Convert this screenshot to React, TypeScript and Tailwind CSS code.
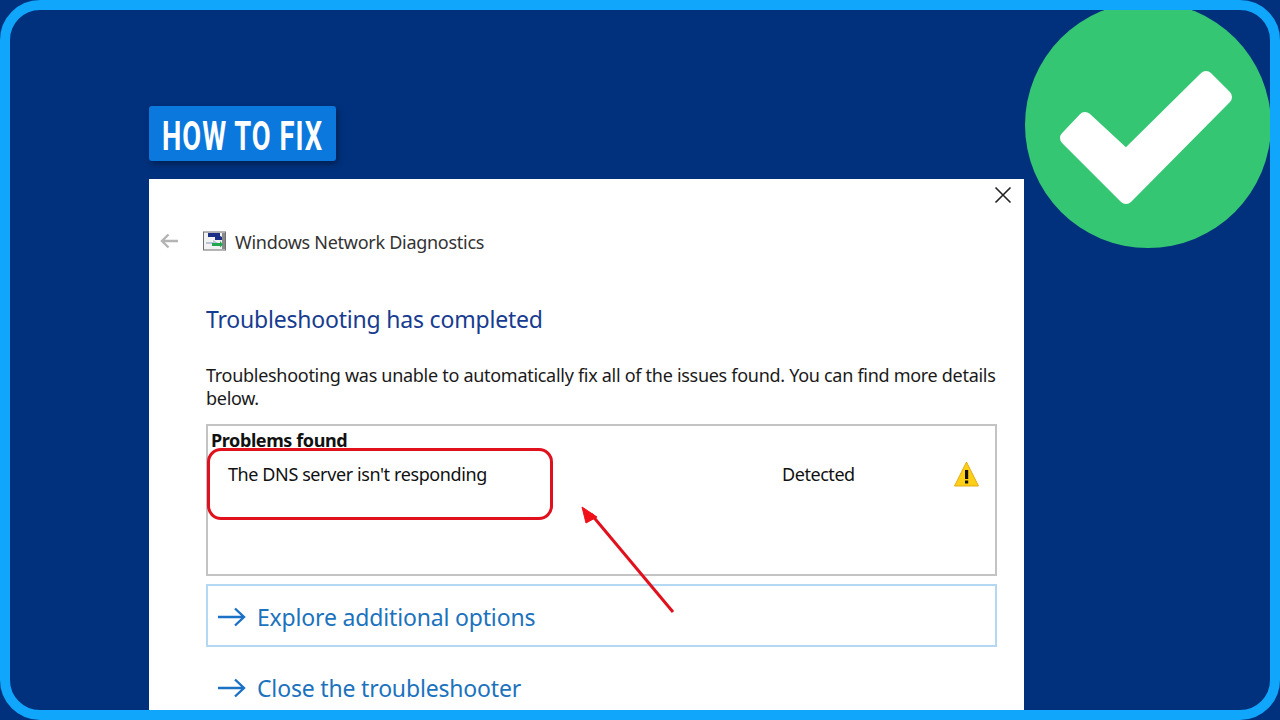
const SEGOE = "font-['Noto_Sans',sans-serif]";

const DiagnosticsIcon = () => (
  <svg width="24" height="20" viewBox="0 0 24 20" className="shrink-0">
    <rect x="0.5" y="1" width="22" height="18" fill="#f2f2f2" stroke="#6f6f6f" />
    <rect x="19" y="2" width="3" height="16" fill="#8a8a8a" />
    <path d="M5 2h12v3l2 1v3h-7V6H5z" fill="#1b2f86" />
    <path d="M3 11h7V9l5 3-5 3v-2H3z" fill="#b9c4d6" />
    <path d="M9 12h8v-2l3 3.5-3 3V15H9z" fill="#22a651" />
  </svg>
);

const LinkArrow = () => (
  <svg width="28" height="20" viewBox="0 0 28 20" className="shrink-0">
    <path d="M0 10h26M17 1.5l9 8.5-9 8.5" fill="none" stroke="#1b72c4" strokeWidth="2.4" />
  </svg>
);

const WarningIcon = () => (
  <svg width="25" height="26" viewBox="0 0 25 26">
    <path d="M12.5 1L24.5 25H.5z" fill="#fdd017" stroke="#e3ab12" strokeWidth="1" strokeLinejoin="round" />
    <rect x="11" y="9" width="3.2" height="9" fill="#111" />
    <rect x="11" y="19.5" width="3.2" height="3" fill="#111" />
  </svg>
);

export default function App() {
  return (
    <div className="w-[1280px] h-[720px] bg-[#01317d] overflow-hidden">
      <div className="relative w-full h-full border-[10px] border-[#0fa6fb] rounded-[40px] overflow-hidden flex flex-col pl-[139px] pt-[96px]">
        {/* badge */}
        <div className="shrink-0 w-[187px] h-[55px] rounded-[3px] bg-[#0a78dc] shadow-[2px_3px_6px_rgba(0,0,0,0.35)] flex items-center pt-[5px]">
          <span className="block ml-[13px] origin-left scale-x-[0.667] whitespace-nowrap text-white text-[41px] leading-none tracking-[1.5px] font-bold font-['Roboto',sans-serif]">
            HOW TO FIX
          </span>
        </div>

        {/* dialog */}
        <div className={`relative mt-[18px] w-[875px] flex-1 bg-white overflow-hidden ${SEGOE}`}>
          <div className="flex justify-end pt-[7px] pr-[12px] h-[28px]">
            <svg width="18" height="18" viewBox="0 0 18 18">
              <path d="M1.5 1.5l15 15M16.5 1.5l-15 15" stroke="#222" strokeWidth="1.6" fill="none" />
            </svg>
          </div>

          <div className="flex items-center h-[40px] mt-[14px] pl-[11px]">
            <svg width="18" height="16" viewBox="0 0 18 16" className="shrink-0">
              <path d="M18 8H2M8.5 1.5L2 8l6.5 6.5" fill="none" stroke="#b4b4b4" strokeWidth="2.4" />
            </svg>
            <div className="ml-[25px]"><DiagnosticsIcon /></div>
            <span className="ml-[8px] pt-[2px] text-[18px] text-[#333] tracking-[-0.28px]">Windows Network Diagnostics</span>
          </div>

          <div className="pl-[57px] pr-[27px]">
            <h1 className="mt-[40px] h-[36px] text-[23px] leading-[36px] text-[#173c8f] tracking-[-0.2px]">
              Troubleshooting has completed
            </h1>
            <p className="mt-[27px] text-[18px] leading-[23px] text-[#1a1a1a] tracking-[-0.29px]">
              Troubleshooting was unable to automatically fix all of the issues found. You can find more details below.
            </p>

            {/* problems list */}
            <div className="mt-[14px] h-[152px] border-2 border-[#c3c3c3] pl-[3px] pr-[16px] pt-[1px]">
              <div className="text-[18px] leading-[26px] font-bold text-[#111] tracking-[-0.4px]">Problems found</div>
              <div className="flex items-center h-[40px] mt-[1px] pl-[17px]">
                <span className="w-[554px] text-[18px] text-[#111] tracking-[-0.4px]">The DNS server isn&apos;t responding</span>
                <span className="w-[172px] text-[18px] text-[#111] tracking-[-0.45px]">Detected</span>
                <WarningIcon />
              </div>
            </div>

            <div className="mt-[8px] h-[63px] border-2 border-[#b5d8f2] flex items-center pl-[10px]">
              <div className="pt-[2px]"><LinkArrow /></div>
              <span className="ml-[11px] pt-[3px] text-[23px] text-[#1b72bd] tracking-[-0.17px]">Explore additional options</span>
            </div>
            <div className="mt-[10px] flex items-center h-[62px] pl-[12px]">
              <LinkArrow />
              <span className="ml-[11px] text-[23px] text-[#1b72bd] tracking-[-0.17px]">Close the troubleshooter</span>
            </div>
          </div>

          {/* red callout over the list */}
          <div className="absolute left-[58px] top-[269px] w-[346px] h-[72px] border-[3px] border-[#e0101c] rounded-[14px]" />
          <svg className="absolute left-[420px] top-[320px]" width="110" height="120" viewBox="0 0 110 120">
            <path d="M104 113L22 15" stroke="#e0101c" strokeWidth="3" fill="none" />
            <path d="M13 8L28 18 17 24z" fill="#f01018" stroke="#f01018" strokeWidth="1" strokeLinejoin="round" />
          </svg>
        </div>

        {/* green check */}
        <svg className="absolute left-[1015px] top-[-8px]" width="246" height="246" viewBox="1025 2 246 246">
          <circle cx="1148" cy="125" r="123" fill="#34c672" />
          <path
            d="M1067 138L1085 119L1126 157L1206 78L1225 97L1126 197Z"
            fill="#fff"
            stroke="#fff"
            strokeWidth="14"
            strokeLinejoin="round"
          />
        </svg>
      </div>
    </div>
  );
}
